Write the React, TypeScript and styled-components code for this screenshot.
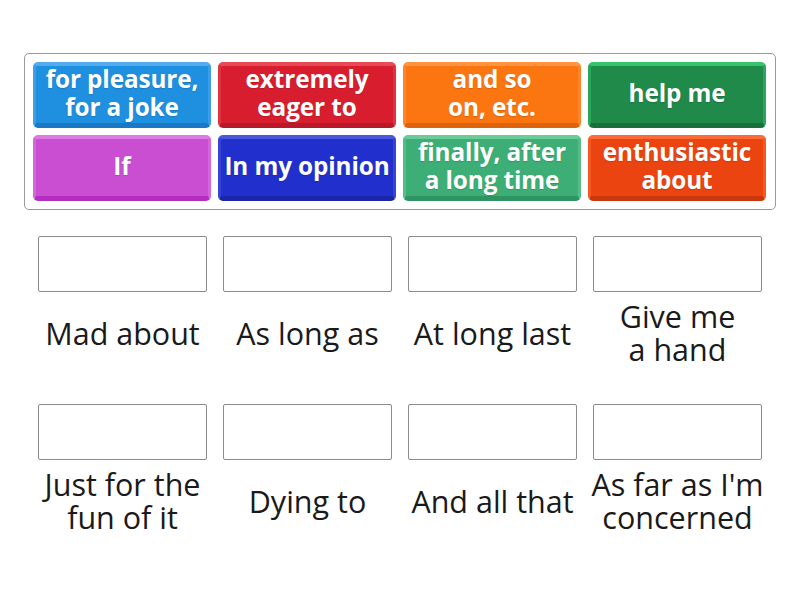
import React from "react";
import styled, { createGlobalStyle } from "styled-components";

const Global = createGlobalStyle`
  html, body { margin: 0; padding: 0; background: #ffffff; }
  body { font-family: "Open Sans", "DejaVu Sans", sans-serif; }
`;

const Page = styled.div`
  width: 800px;
  height: 600px;
  padding-top: 53px;
  box-sizing: border-box;
  display: flex;
  flex-direction: column;
  align-items: flex-start;
`;

const Tray = styled.div`
  margin-left: 24px;
  width: 752px;
  box-sizing: border-box;
  border: 1px solid #9a9a9a;
  border-radius: 5px;
  padding: 8px;
  display: grid;
  grid-template-columns: repeat(4, 178px);
  grid-auto-rows: 66px;
  gap: 7px;
`;

type Palette = { face: string; top: string; bottom: string; side: string };

const Tile = styled.div<{ $p: Palette }>`
  box-sizing: border-box;
  border-radius: 5px;
  background: ${(p) => p.$p.face};
  border-top: 4px solid ${(p) => p.$p.top};
  border-left: 3px solid ${(p) => p.$p.side};
  border-right: 3px solid ${(p) => p.$p.side};
  border-bottom: 5px solid ${(p) => p.$p.bottom};
  padding-bottom: 4px;
  display: flex;
  align-items: center;
  justify-content: center;
  text-align: center;
  color: #ffffff;
  font-weight: 700;
  font-size: 24.3px;
  line-height: 28px;
  letter-spacing: -0.1px;
  white-space: nowrap;
  text-shadow: 0 1px 1px rgba(0, 0, 0, 0.15);
`;

const Board = styled.div`
  margin-left: 38px;
  margin-top: 26px;
  display: grid;
  grid-template-columns: repeat(4, 169px);
  column-gap: 16px;
  row-gap: 30px;
`;

const Cell = styled.div`
  display: flex;
  flex-direction: column;
  align-items: stretch;
`;

const DropBox = styled.div`
  height: 56px;
  box-sizing: border-box;
  border: 1px solid #8c8c8c;
  border-radius: 2px;
  background: #ffffff;
`;

const Label = styled.div`
  height: 82px;
  box-sizing: border-box;
  padding-bottom: 0px;
  display: flex;
  align-items: center;
  justify-content: center;
  text-align: center;
  color: #1a1a1a;
  font-size: 30.5px;
  line-height: 33px;
  white-space: nowrap;
  margin: 0 -8px;
`;

const blue: Palette = { face: "#1f8fe0", top: "#52adf0", side: "#3a9fe8", bottom: "#1a78c6" };
const red: Palette = { face: "#d81e2e", top: "#e84a56", side: "#de3442", bottom: "#b8182a" };
const orange: Palette = { face: "#fb7510", top: "#ff9440", side: "#ff8428", bottom: "#dd640c" };
const green: Palette = { face: "#1f8a4a", top: "#34c46a", side: "#29a75a", bottom: "#18703c" };
const magenta: Palette = { face: "#c94ed2", top: "#dc7ce2", side: "#d266da", bottom: "#b32ebe" };
const indigo: Palette = { face: "#2130cc", top: "#4a58e0", side: "#3644d6", bottom: "#1a26a8" };
const teal: Palette = { face: "#3daf76", top: "#68cb98", side: "#52bd86", bottom: "#2e9462" };
const vermilion: Palette = { face: "#ec4410", top: "#ff6a36", side: "#f55820", bottom: "#c8380c" };

const tiles: { lines: string[]; p: Palette }[] = [
  { lines: ["for pleasure,", "for a joke"], p: blue },
  { lines: ["extremely", "eager to"], p: red },
  { lines: ["and so", "on, etc."], p: orange },
  { lines: ["help me"], p: green },
  { lines: ["If"], p: magenta },
  { lines: ["In my opinion"], p: indigo },
  { lines: ["finally, after", "a long time"], p: teal },
  { lines: ["enthusiastic", "about"], p: vermilion },
];

const labels: string[][] = [
  ["Mad about"],
  ["As long as"],
  ["At long last"],
  ["Give me", "a hand"],
  ["Just for the", "fun of it"],
  ["Dying to"],
  ["And all that"],
  ["As far as I'm", "concerned"],
];

const Lines: React.FC<{ lines: string[] }> = ({ lines }) => (
  <div>
    {lines.map((l, i) => (
      <div key={i}>{l}</div>
    ))}
  </div>
);

export default function App() {
  return (
    <>
      <Global />
      <Page>
        <Tray>
          {tiles.map((t, i) => (
            <Tile key={i} $p={t.p}>
              <Lines lines={t.lines} />
            </Tile>
          ))}
        </Tray>
        <Board>
          {labels.map((l, i) => (
            <Cell key={i}>
              <DropBox />
              <Label>
                <Lines lines={l} />
              </Label>
            </Cell>
          ))}
        </Board>
      </Page>
    </>
  );
}
